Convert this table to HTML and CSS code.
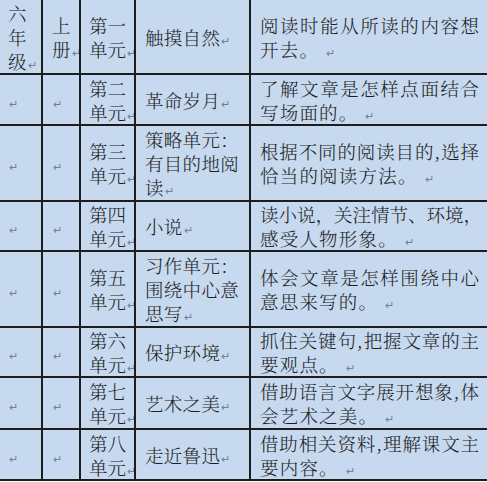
FILE: index.html
```html
<!DOCTYPE html>
<html lang="zh">
<head>
<meta charset="utf-8">
<link rel="stylesheet" href="styles.css">
</head>
<body>
<table class="plan">
  <colgroup>
    <col class="c1"><col class="c2"><col class="c3"><col class="c4"><col class="c5">
  </colgroup>
  <tr class="r75">
    <td class="grade">六<br>年<br>级<span class="pm">↵</span></td>
    <td class="term">上<br>册<span class="pm">↵</span></td>
    <td class="unit">第一<br>单元<span class="pm">↵</span></td>
    <td class="theme">触摸自然<span class="pm">↵</span></td>
    <td class="goal"><span class="ln">阅读时能从所读的内容想</span><span class="last">开去。 <span class="pm">↵</span></span></td>
  </tr>
  <tr class="r51">
    <td class="grade"><span class="pm">↵</span></td>
    <td class="term"><span class="pm">↵</span></td>
    <td class="unit">第二<br>单元<span class="pm">↵</span></td>
    <td class="theme">革命岁月<span class="pm">↵</span></td>
    <td class="goal"><span class="ln">了解文章是怎样点面结合</span><span class="last">写场面的。 <span class="pm">↵</span></span></td>
  </tr>
  <tr class="r76">
    <td class="grade"><span class="pm">↵</span></td>
    <td class="term"><span class="pm">↵</span></td>
    <td class="unit">第三<br>单元<span class="pm">↵</span></td>
    <td class="theme">策略单元：<br>有目的地阅<br>读<span class="pm">↵</span></td>
    <td class="goal"><span class="ln">根据不同的阅读目的,选择</span><span class="last">恰当的阅读方法。 <span class="pm">↵</span></span></td>
  </tr>
  <tr class="r50">
    <td class="grade"><span class="pm">↵</span></td>
    <td class="term"><span class="pm">↵</span></td>
    <td class="unit">第四<br>单元<span class="pm">↵</span></td>
    <td class="theme">小说<span class="pm">↵</span></td>
    <td class="goal"><span class="ln">读小说，关注情节、环境，</span><span class="last">感受人物形象。 <span class="pm">↵</span></span></td>
  </tr>
  <tr class="r76">
    <td class="grade"><span class="pm">↵</span></td>
    <td class="term"><span class="pm">↵</span></td>
    <td class="unit">第五<br>单元<span class="pm">↵</span></td>
    <td class="theme">习作单元：<br>围绕中心意<br>思写<span class="pm">↵</span></td>
    <td class="goal"><span class="ln">体会文章是怎样围绕中心</span><span class="last">意思来写的。 <span class="pm">↵</span></span></td>
  </tr>
  <tr class="r50">
    <td class="grade"><span class="pm">↵</span></td>
    <td class="term"><span class="pm">↵</span></td>
    <td class="unit">第六<br>单元<span class="pm">↵</span></td>
    <td class="theme">保护环境<span class="pm">↵</span></td>
    <td class="goal"><span class="ln">抓住关键句,把握文章的主</span><span class="last">要观点。 <span class="pm">↵</span></span></td>
  </tr>
  <tr class="r52">
    <td class="grade"><span class="pm">↵</span></td>
    <td class="term"><span class="pm">↵</span></td>
    <td class="unit">第七<br>单元<span class="pm">↵</span></td>
    <td class="theme">艺术之美<span class="pm">↵</span></td>
    <td class="goal"><span class="ln">借助语言文字展开想象,体</span><span class="last">会艺术之美。 <span class="pm">↵</span></span></td>
  </tr>
  <tr class="r51">
    <td class="grade"><span class="pm">↵</span></td>
    <td class="term"><span class="pm">↵</span></td>
    <td class="unit">第八<br>单元<span class="pm">↵</span></td>
    <td class="theme">走近鲁迅<span class="pm">↵</span></td>
    <td class="goal"><span class="ln">借助相关资料,理解课文主</span><span class="last">要内容。 <span class="pm">↵</span></span></td>
  </tr>
</table>
</body>
</html>
```

FILE: styles.css
```css
html, body {
  margin: 0;
  padding: 0;
  background: #ffffff;
  overflow: hidden;
}

.plan {
  border-collapse: collapse;
  table-layout: fixed;
  width: 487px;
  background: #c6d9ef;
  font-family: "Noto Serif CJK SC", "Noto Sans CJK SC", serif;
  font-weight: 300;
  font-size: 18.5px;
  line-height: 24px;
  color: #1e1e1e;
}

.c1 { width: 42px; }
.c2 { width: 38px; }
.c3 { width: 55px; }
.c4 { width: 115px; }
.c5 { width: 237px; }

.plan td {
  border-left: 2px solid #1d1d1d;
  border-bottom: 2px solid #1d1d1d;
  padding: 0 8px 0 9px;
  vertical-align: middle;
  text-align: left;
  overflow: hidden;
  white-space: nowrap;
}

.plan td.grade {
  border-left: none;
  padding-left: 8px;
  padding-right: 0;
}

.plan td.term {
  padding-left: 9px;
  padding-right: 0;
}

.plan td.unit {
  padding-left: 8px;
  padding-right: 0;
}

.plan td.theme {
  padding-left: 9px;
  letter-spacing: 0.3px;
}

.plan td.goal {
  padding-left: 9px;
  padding-right: 8px;
}

.r75 td { height: 73px; }
.r76 td { height: 74px; }
.r50 td { height: 48px; }
.r51 td { height: 49px; }
.r52 td { height: 50px; }

.ln {
  display: block;
  height: 24px;
  text-align: justify;
  text-align-last: justify;
}

.last {
  display: block;
  height: 24px;
  letter-spacing: 1.2px;
}

.pm {
  font-family: "DejaVu Sans", sans-serif;
  font-size: 11px;
  line-height: 0;
  color: #6f819b;
  letter-spacing: 0;
  margin-left: 1px;
}
```
